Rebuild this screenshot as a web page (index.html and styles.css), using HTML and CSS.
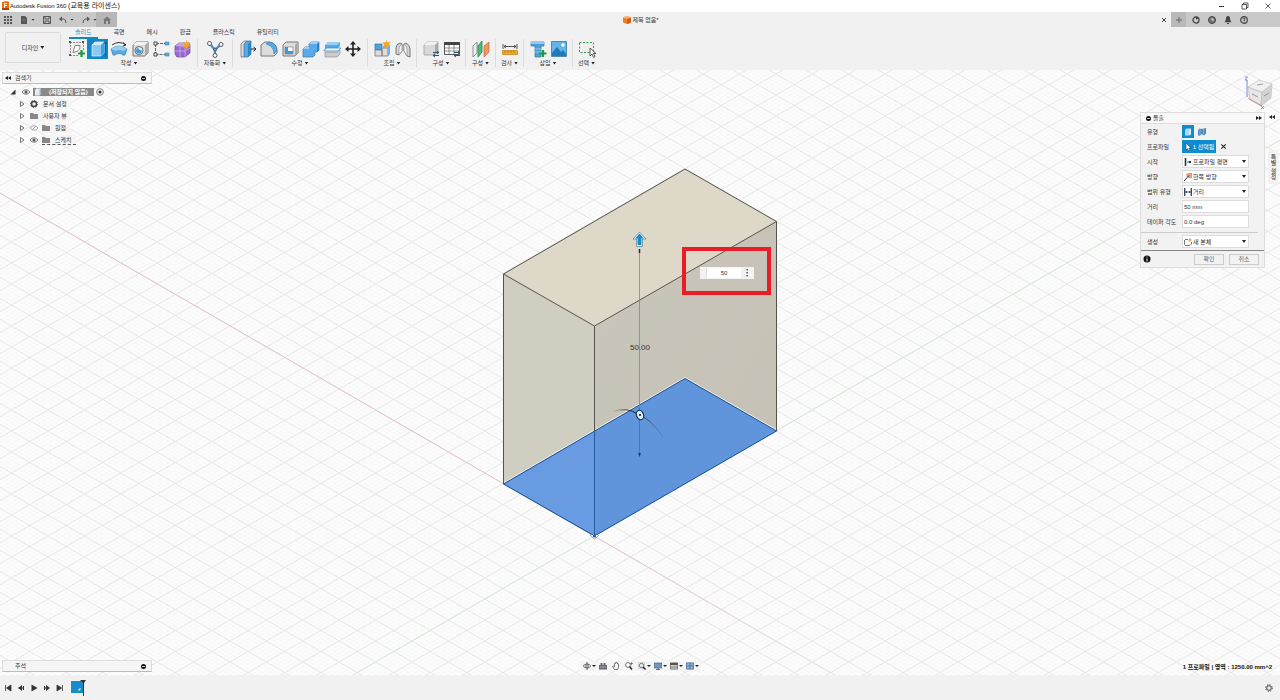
FILE: index.html
```html
<!DOCTYPE html>
<html lang="ko">
<head>
    <meta charset="UTF-8">
    <meta name="viewport" content="width=device-width, initial-scale=1.0">
    <title>Autodesk Fusion 360</title>
    <link rel="stylesheet" href="styles.css">
</head>
<body>

<!-- Title bar -->
<header class="titlebar">
    <svg class="app-logo" viewBox="0 0 8 10"><path d="M1 1l5-1 2 1v8H1z" fill="#f26a0c"/><path d="M1 7h7v2H1z" fill="#b63d00"/><path d="M3 2h3v1H4v1h2v1H4v2H3z" fill="#fff"/></svg>
    <h1>Autodesk Fusion 360 <span>(교육용 라이센스)</span></h1>
    <div class="window-buttons">
        <button aria-label="최소화"><svg viewBox="0 0 8 8"><path d="M1 4.500h5" stroke="#333" fill="none"/></svg></button>
        <button aria-label="복원"><svg viewBox="0 0 8 8"><path d="M1 2.500h4.500V7H1zM2.500 2.500V1H7v4.500H5.500" stroke="#333" stroke-width=".8" fill="none"/></svg></button>
        <button aria-label="닫기"><svg viewBox="0 0 8 8"><path d="M1.500 1.500l5 5m0-5l-5 5" stroke="#333" stroke-width=".8" fill="none"/></svg></button>
    </div>
</header>

<!-- Quick access bar and document tab -->
<div class="docbar">
    <div class="quick">
        <button aria-label="데이터 패널"><svg viewBox="0 0 8 8"><path d="M0 0h2v2H0zM3 0h2v2H3zM6 0h2v2H6zM0 3h2v2H0zM3 3h2v2H3zM6 3h2v2H6zM0 6h2v2H0zM3 6h2v2H3zM6 6h2v2H6z" fill="#555"/></svg></button>
        <button class="caret" aria-label="파일"><svg viewBox="0 0 8 8"><path d="M1 0h4l2 2v6H1z" fill="#555"/><path d="M2.500 3.500h3m-3 1.500h3" stroke="#999" stroke-width=".5"/></svg></button>
        <button aria-label="저장"><svg viewBox="0 0 8 8"><path d="M.5.500h7v7h-7zM2 .500v2.500h4V.500M2 7.500V5h4v2.500" fill="none" stroke="#555"/></svg></button>
        <button class="caret" aria-label="명령 취소"><svg viewBox="0 0 8 8"><path d="M0 3l3-2.500v5z" fill="#555"/><path d="M2 3h2.500Q7 3.500 7 7" fill="none" stroke="#555"/></svg></button>
        <button class="caret" aria-label="명령 복구"><svg viewBox="0 0 8 8"><path d="M8 3L5 .500v5z" fill="#555"/><path d="M6 3H3.500Q1 3.500 1 7" fill="none" stroke="#555"/></svg></button>
    </div>
    <button class="home" aria-label="홈"><svg viewBox="0 0 8 8"><path d="M4 .500L0 4h1v4h2V5h2v3h2V4h1z" fill="#777"/></svg></button>
    <div class="doc-tab">
        <svg viewBox="0 0 8 8"><path d="M4 0l4 1.500v5L4 8 0 6.500v-5z" fill="#ef7d24"/><path d="M0 1.500L4 3l4-1.500L4 0z" fill="#ffb36b"/><path d="M4 3v5l4-1.500v-5z" fill="#d85e0c"/></svg>
        <span>제목 없음*</span>
        <button class="close" aria-label="탭 닫기"><svg viewBox="0 0 8 8"><path d="M2 2l4 4m0-4L2 6" stroke="#444" fill="none"/></svg></button>
    </div>
    <button class="new-tab" aria-label="새 디자인"><svg viewBox="0 0 8 8"><path d="M4 1v6M1 4h6" stroke="#666" fill="none"/></svg></button>
    <div class="doc-tools">
        <button aria-label="확장"><svg viewBox="0 0 8 8"><circle cx="4" cy="4" r="3" fill="none" stroke="#444" stroke-width="1.300"/><path d="M4 3.500V1l2.500 1.500z" fill="#444"/></svg></button>
        <button aria-label="작업 상태"><svg viewBox="0 0 8 8"><circle cx="4" cy="4" r="3.500" fill="#777" stroke="#444"/><path d="M4 2v2h2" stroke="#ddd" fill="none"/></svg></button>
        <button aria-label="알림"><svg viewBox="0 0 8 8"><path d="M4 0c2 0 2 2 2.200 4L7.500 6.200h-7L1.800 4C2 2 2 0 4 0M3 7h2v1H3z" fill="#444"/></svg></button>
        <button aria-label="도움말"><svg viewBox="0 0 8 8"><circle cx="4" cy="4" r="3.300" fill="none" stroke="#444" stroke-width="1.200"/><path d="M2.800 3.200Q3 2 4 2t1.100 1Q5 4 4 4.200V5m0 .500v.800" stroke="#444" fill="none"/></svg></button>
    </div>
</div>

<!-- Ribbon -->
<div class="ribbon">
    <button class="workspace">디자인 <i class="tri"></i></button>
    <div class="ribbon-main">
        <nav class="tabs">
            <a href="#" class="active">솔리드</a>
            <a href="#">곡면</a>
            <a href="#">메시</a>
            <a href="#">판금</a>
            <a href="#">플라스틱</a>
            <a href="#">유틸리티</a>
        </nav>
        <div class="groups">
            <div class="group first">
                <div class="icons">
                    <button aria-label="스케치 작성"><svg viewBox="0 0 18 18"><path d="M2 2.500h13M2.500 2v13M2 15.500h8M15.500 2v8" fill="none" stroke="#777" stroke-width=".8" stroke-dasharray="2 1"/><path d="M5 12.500l2-7h5q1 4-3 6z" fill="#fff" stroke="#666" stroke-width=".8"/><path d="M1 1h2v2H1zM14 1h2v2h-2zM1 14h2v2H1z" fill="#555"/><path d="M13.500 10v7M10 13.500h7" stroke="#1c9b3c" stroke-width="2.200"/></svg></button>
                    <button class="selected" aria-label="돌출"><svg viewBox="0 0 18 18"><path d="M3 5l3-3h9v11l-3 3H3z" fill="#8cc9f5" stroke="#e8f5ff" stroke-width=".7"/><path d="M3 5l3-3h9l-3 3z" fill="#d3ecfd"/><path d="M12 5l3-3v11l-3 3z" fill="#459ee0"/><path d="M16.500 17V2m-1.500 2l1.500-2.500L18 4" fill="none" stroke="#114f80" stroke-width=".7"/></svg></button>
                    <button aria-label="회전"><svg viewBox="0 0 18 18"><path d="M1 9q8-6 16 0l-2 6q-2 1-3.500-1-2.500-1-5 0Q5 16 3 15z" fill="#59a9e3" stroke="#3578ab" stroke-width=".6"/><path d="M1 9q8-6 16 0l-4 2q-4-2-8 0z" fill="#96cdf3"/><path d="M2 5q7-5 14 0M13 2.500l3 2.500-3 1" fill="none" stroke="#333"/></svg></button>
                    <button aria-label="구멍"><svg viewBox="0 0 18 18"><path d="M2 5l3-3h12v11l-3 3H2z" fill="#ddd" stroke="#777"/><path d="M14 5l3-3v11l-3 3z" fill="#aaa"/><path d="M2 5l3-3h12l-3 3z" fill="#f3f3f3"/><circle cx="8" cy="10.500" r="4" fill="#e9f5fd" stroke="#666"/><path d="M5 10.500a3 3 0 006 0q-3 0-4-3-2 1-2 3" fill="#3f9bd9"/></svg></button>
                    <button aria-label="직사각형 패턴"><svg viewBox="0 0 18 18"><path d="M4 3.500h10M3.500 4v10m0 .500h10" fill="none" stroke="#666" stroke-dasharray="3 1"/><path d="M2 2h3v3H2zM2 13h3v3H2z" fill="#fff" stroke="#444"/><path d="M13 2h4v3h-4zM13 13h4v3h-4z" fill="#5daee6" stroke="#397eb0" stroke-width=".6"/></svg></button>
                    <button aria-label="양식 작성"><svg viewBox="0 0 18 18"><path d="M2 6l4-3h10l1 2v8l-5 4H4l-2-3z" fill="#9868cf" stroke="#704aa5" stroke-width=".7"/><path d="M2 6l4-3h10l-4 4z" fill="#c4a5e7"/><path d="M7 7v10M2 11h10l5-3M12 7v10" stroke="#d9c5ef" stroke-width=".6" fill="none"/><path d="M13.500 0l1 3 3-1-1.500 2.500L18 6l-3 .500-1 3L12.500 7l-3 .500L11 5 9.500 2.500l3 .500z" fill="#f7a51d"/></svg></button>
                </div>
                <button class="group-label">작성 <i class="tri"></i></button>
            </div>
            <div class="group wide">
                <div class="icons">
                    <button aria-label="자동화"><svg viewBox="0 0 18 18"><path d="M4 4l5 6 5-5M9 10v5" stroke="#3a91ce" stroke-width="2.200" fill="none"/><g fill="#fff" stroke="#555"><circle cx="3.500" cy="3.500" r="2"/><circle cx="15" cy="4.500" r="2"/><circle cx="9" cy="9.500" r="1.500" fill="#61b1e6"/><circle cx="9" cy="15.500" r="2"/></g></svg></button>
                </div>
                <button class="group-label">자동화 <i class="tri"></i></button>
            </div>
            <div class="group roomy">
                <div class="icons">
                    <button aria-label="밀고 당기기"><svg viewBox="0 0 18 18"><path d="M2 4l3-3h3v13l-3 3H2z" fill="#ddd" stroke="#777" stroke-width=".8"/><path d="M5 4l3-3h4v13l-3 3H5z" fill="#56a9e5" stroke="#3475a5" stroke-width=".7"/><path d="M9 4l3-3v13l-3 3z" fill="#2f86c4"/><path d="M12 9h4m-1.500-2L17 9l-2.500 2" stroke="#222" fill="none"/></svg></button>
                    <button aria-label="모깎기"><svg viewBox="0 0 18 18"><path d="M1 16V5l4-3h4q8 1 8 9v2l-3 3z" fill="#ddd" stroke="#777"/><path d="M6 4l3-2q8 1 8 9l-3 3q0-8-8-10" fill="#57abe6" stroke="#397bab" stroke-width=".6"/></svg></button>
                    <button aria-label="쉘"><svg viewBox="0 0 18 18"><path d="M2 5l3-3h12v11l-3 3H2z" fill="#ddd" stroke="#777"/><path d="M14 5l3-3v11l-3 3z" fill="#aaa"/><path d="M4 7h8v7H4z" fill="#fff" stroke="#777" stroke-width=".6"/><path d="M4 7h3v4h5v3H4z" fill="#3e99da"/></svg></button>
                    <button aria-label="결합"><svg viewBox="0 0 18 18"><path d="M1 9l2-2h4V4l2-2h8v8l-2 2h-2v3l-2 2H1z" fill="#58abe8" stroke="#3478ab" stroke-width=".7"/><path d="M7 4l2-2h8l-2 2zM1 9l2-2h4v2z" fill="#9bd1f5"/><path d="M15 4l2-2v8l-2 2z" fill="#2e82c1"/></svg></button>
                    <button aria-label="본체 분할"><svg viewBox="0 0 18 18"><path d="M2 5l3-3h12v4l-3 3H2z" fill="#55aae7"/><path d="M2 5l3-3h12l-3 3z" fill="#9bd1f5"/><path d="M1 10l3-2h14l-3 3H1z" fill="#eaf5fb" stroke="#3c86b8" stroke-width=".7"/><path d="M2 12h12l3-2v4l-3 3H2z" fill="#ccc" stroke="#888" stroke-width=".6"/></svg></button>
                    <button aria-label="이동"><svg viewBox="0 0 18 18"><path d="M9 3v12M3 9h12" stroke="#222" stroke-width="1.600"/><path d="M9 1l3 3.500H6zM9 17l3-3.500H6zM1 9l3.500-3v6zM17 9l-3.500-3v6z" fill="#222"/></svg></button>
                </div>
                <button class="group-label">수정 <i class="tri"></i></button>
            </div>
            <div class="group">
                <div class="icons">
                    <button aria-label="새 구성요소"><svg viewBox="0 0 18 18"><path d="M2 4h7v6H2z" fill="#4ca3e1" stroke="#3478a9" stroke-width=".7"/><path d="M2 10h7v6H2zM9 8h6v8H9z" fill="#ddd" stroke="#777" stroke-width=".8"/><path d="M9 8l2-2h6l-2 2zM15 8l2-2v8l-2 2z" fill="#69b5ea"/><path d="M13.500 0l1 2.500 3-1L16 4l2 1.500-3 .500-1 3-1.500-2.500-3 .500L11 5 9.500 2l3 .500z" fill="#f7a51d"/></svg></button>
                    <button aria-label="접합"><svg viewBox="0 0 18 18"><path d="M2 8q0-4 4-5l2 1v7l-3 4-3-1zM16 9q0-4-4-6l-2 1v7l3 5 3 1z" fill="#d5d5d5" stroke="#777"/><path d="M5 9q0-3 3-5v7l-3 4zM13 9q0-3-3-5v7l3 5z" fill="#f4f4f4" stroke="#888" stroke-width=".6"/></svg></button>
                </div>
                <button class="group-label">조립 <i class="tri"></i></button>
            </div>
            <div class="group">
                <div class="icons">
                    <button aria-label="구성"><svg viewBox="0 0 18 18"><path d="M2 5l3-3h11v9l-3 4H2z" fill="#d9d9d9" stroke="#999" stroke-width=".7"/><path d="M2 5l3-3h11l-3 3z" fill="#f1f1f1"/><path d="M13 5l3-3v9l-3 4z" fill="#aaa"/><path d="M11 12.500h6m-6 3h6M15 11l2 1.500-2 1.500m-2 0l-2 1.500 2 1.500" fill="none" stroke="#31536b"/></svg></button>
                    <button aria-label="구성 테이블"><svg viewBox="0 0 18 18"><path d="M1.500 2.500h15v12h-15z" fill="#fff" stroke="#555"/><path d="M1 2h16v3H1z" fill="#444"/><path d="M2 8h14M2 11h14M6 5v9M11 5v9" stroke="#777" stroke-width=".8"/><path d="M11 12.500h6m-6 3h6M15 11l2 1.500-2 1.500m-2 0l-2 1.500 2 1.500" fill="none" stroke="#31536b"/></svg></button>
                </div>
                <button class="group-label">구성 <i class="tri"></i></button>
            </div>
            <div class="group roomy">
                <div class="icons">
                    <button aria-label="평면"><svg viewBox="0 0 18 18"><path d="M1 6l4-4v11l-4 4z" fill="#eee" stroke="#777" stroke-width=".8"/><path d="M6 6l4-5v11l-4 5z" fill="#4dbd7c" stroke="#27834e" stroke-width=".8"/><path d="M12 6l5-4v10l-5 5z" fill="#ef9761" stroke="#c66b35" stroke-width=".7"/></svg></button>
                </div>
                <button class="group-label">구성 <i class="tri"></i></button>
            </div>
            <div class="group">
                <div class="icons">
                    <button aria-label="측정"><svg viewBox="0 0 18 18"><path d="M2 4v5M16 4v5M3 6.500h12M5 5L3 6.500 5 8m8-3l2 1.500L13 8" fill="none" stroke="#444" stroke-width=".9"/><path d="M1.500 10.500h15v4h-15z" fill="#efa928" stroke="#c37d12" stroke-width=".7"/><path d="M4 11v1.500m3-1.500v1.500m3-1.500v1.500m3-1.500v1.500" stroke="#8b570a" stroke-width=".6"/></svg></button>
                </div>
                <button class="group-label">검사 <i class="tri"></i></button>
            </div>
            <div class="group">
                <div class="icons">
                    <button aria-label="파스너 삽입"><svg viewBox="0 0 18 18"><path d="M2 2h13v4h-3v11H6V6H2z" fill="#4c9ed7" stroke="#34759f" stroke-width=".7"/><path d="M2 2h13v2H2z" fill="#91c9f1"/><path d="M6 9h6m-6 3h6" stroke="#b5dcf5" stroke-width=".7"/><path d="M14 10v7m-3.500-3.500h7" stroke="#1c9b3c" stroke-width="2.200"/></svg></button>
                    <button aria-label="캔버스"><svg viewBox="0 0 18 18"><path d="M1.500 1.500h15v15h-15z" fill="#63b4ea" stroke="#4a8bb8"/><path d="M2 13l5-6 4 5 2-2 3 4v2H2z" fill="#2379b4"/><circle cx="13" cy="5" r="1.700" fill="#fff"/></svg></button>
                </div>
                <button class="group-label">삽입 <i class="tri"></i></button>
            </div>
            <div class="group last">
                <div class="icons">
                    <button aria-label="선택"><svg viewBox="0 0 18 18"><path d="M1.500 2.500h14v10h-14z" fill="none" stroke="#2f9d51" stroke-dasharray="2 1.500"/><path d="M12 8v8l2-2 1.500 3.500 1.500-1-1.500-3H18z" fill="#fff" stroke="#333" stroke-width=".8"/></svg></button>
                </div>
                <button class="group-label">선택 <i class="tri"></i></button>
            </div>
        </div>
    </div>
</div>

<!-- Modeling viewport -->
<main class="viewport">
    <svg class="scene" viewBox="0 70 1280 605" preserveAspectRatio="xMidYMid slice">
        <defs>
            <pattern id="minor" x="594" y="536" width="7.280" height="4.200" patternUnits="userSpaceOnUse">
                <path d="M0 0l7.280 4.200M0 4.200L7.280 0" stroke="#f1f1f1" stroke-width=".5"/>
            </pattern>
            <pattern id="major" x="594" y="536" width="36.400" height="21" patternUnits="userSpaceOnUse">
                <path d="M0 0l36.400 21M0 21L36.400 0" stroke="#dedede" stroke-width=".7"/>
            </pattern>
            <linearGradient id="rightFace" x1="0" y1="0" x2="1" y2="1">
                <stop offset="0" stop-color="#c9c6bb"/>
                <stop offset="1" stop-color="#c5c0b4"/>
            </linearGradient>
            <linearGradient id="axisX" gradientUnits="userSpaceOnUse" x1="0" y1="0" x2="834" y2="0">
                <stop offset="0" stop-color="#dfb9bc"/>
                <stop offset=".75" stop-color="#dfb9bc"/>
                <stop offset="1" stop-color="#dfb9bc" stop-opacity=".2"/>
            </linearGradient>
            <linearGradient id="arc" x1="0" x2="1">
                <stop offset="0" stop-color="#222" stop-opacity="0"/>
                <stop offset=".4" stop-color="#222"/>
                <stop offset="1" stop-color="#222" stop-opacity=".1"/>
            </linearGradient>
        </defs>
        <rect y="70" width="1280" height="605" fill="#fdfdfd"/>
        <rect y="70" width="1280" height="605" fill="url(#minor)"/>
        <rect y="70" width="1280" height="605" fill="url(#major)"/>
        <path d="M0 193l594 343 240 139" stroke="url(#axisX)" stroke-width=".8" fill="none"/>
        <path d="M353 675l241-139L1280 140" stroke="#cfe9cf" stroke-width=".8" fill="none"/>

        <!-- box -->
        <path d="M503.500 274L594.500 326v210L503.500 484z" fill="#d0cdc1"/>
        <path d="M594.500 326L776.500 221.500V431L594.500 536z" fill="url(#rightFace)"/>
        <path d="M685 169l91.500 52.500L594.500 326l-91-52z" fill="#ddd8c8"/>
        <path d="M503.500 484L685 378.500 776.500 431 594.500 536z" fill="#6195db"/>
        <path d="M503.500 484l91-52.500V536z" fill="#699be2"/>
        <path d="M503.500 483L685 377.500 776.500 430" fill="none" stroke="#f5f4ee"/>
        <path d="M503.500 484L685 378.500 776.500 431 594.500 536z" fill="none" stroke="#16509b"/>
        <path d="M503.500 484V274L685 169l91.500 52.500V431M503.500 274l91 52 182-104.500M594.500 326v105" fill="none" stroke="#54534c"/>
        <path d="M594.500 431v105" stroke="#275a9f"/>

        <!-- distance manipulator -->
        <path d="M639.500 250v157" stroke="#8a877e" stroke-width=".8"/>
        <path d="M639.500 407v48" stroke="#3c6fb4" stroke-width=".8"/>
        <path d="M639.500 249v4" stroke="#222" stroke-width="1.500"/>
        <path d="M638 453h3l-1.500 4z" fill="#173f75"/>
        <path d="M639.500 232l6.500 7h-3.500v7.500h-6V239H633z" fill="#fff" stroke="#3d647f" stroke-width=".6"/>
        <path d="M639.500 233.500l4.500 5h-2.500v6.500h-4v-6.500H635z" fill="#158bd0"/>
        <path d="M612 412q15-6 27 3 12 4 24 22" fill="none" stroke="url(#arc)"/>
        <ellipse cx="640" cy="415" rx="3.500" ry="4.800" transform="rotate(-20 640 415)" fill="#e4eefb" stroke="#12345e" stroke-width="1.200"/>
        <circle cx="640" cy="415" r="1" fill="#111"/>
        <text class="dim" x="640" y="350" text-anchor="middle">50.00</text>
        <path d="M590 535l4.500 4 4.500-4" fill="#fff" stroke="#7d6c94" stroke-width=".7"/>
        <circle cx="594.500" cy="536" r="1.500" fill="#294b93"/>
        <rect x="684" y="249" width="85" height="44" fill="none" stroke="#ea1c27" stroke-width="4"/>
    </svg>

    <div class="value-box">
        <span class="grip"></span>
        <input type="text" value="50" aria-label="거리 값">
        <button aria-label="더 보기"><svg viewBox="0 0 8 8"><path d="M3.500 0h1.200v1.500H3.500zM3.500 3h1.200v1.500H3.500zM3.500 6h1.200v1.500H3.500z" fill="#333"/></svg></button>
    </div>

    <!-- Browser tree -->
    <section class="browser">
        <div class="bar">
            <button aria-label="접기"><svg viewBox="0 0 8 8"><path d="M4 2v4L1 4zM7 2v4L4 4z" fill="#222"/></svg></button>
            <span>검색기</span>
            <button class="dot" aria-label="패널 옵션"></button>
        </div>
        <ul class="tree">
            <li>
                <svg class="open" viewBox="0 0 8 8"><path d="M6.500 1.500v5h-5z" fill="#333"/></svg>
                <svg class="eye" viewBox="0 0 8 8"><path d="M0 4q4-4.500 8 0-4 4.500-8 0z" fill="#fff" stroke="#555" stroke-width=".8"/><circle cx="4" cy="4" r="1.500" fill="#555"/></svg>
                <span class="root"><svg viewBox="0 0 8 8"><path d="M1 2l1.500-1.500H7V6L5.500 7.500H1z" fill="#e8edf5"/><path d="M5.500 2L7 .500V6L5.500 7.500z" fill="#9fb2ca"/></svg>(저장되지 않음)</span>
                <svg class="radio" viewBox="0 0 8 8"><circle cx="4" cy="4" r="3.300" fill="#fff" stroke="#555" stroke-width=".8"/><circle cx="4" cy="4" r="1.600" fill="#234"/></svg>
            </li>
            <li class="child">
                <svg viewBox="0 0 8 8"><path d="M2.500 1.500L6 4 2.500 6.500z" fill="#fff" stroke="#555" stroke-width=".8"/></svg>
                <span class="node"><svg viewBox="0 0 8 8"><circle cx="4" cy="4" r="2.500" fill="none" stroke="#444" stroke-width="1.500"/><circle cx="4" cy="4" r="3.500" fill="none" stroke="#444" stroke-dasharray="1.300 1.400"/></svg>문서 설정</span>
            </li>
            <li class="child">
                <svg viewBox="0 0 8 8"><path d="M2.500 1.500L6 4 2.500 6.500z" fill="#fff" stroke="#555" stroke-width=".8"/></svg>
                <span class="node"><svg viewBox="0 0 8 8"><path d="M0 1h3l1 1h4v5H0z" fill="#888"/></svg>사용자 뷰</span>
            </li>
            <li class="child">
                <svg viewBox="0 0 8 8"><path d="M2.500 1.500L6 4 2.500 6.500z" fill="#fff" stroke="#555" stroke-width=".8"/></svg>
                <svg class="eye off" viewBox="0 0 8 8"><path d="M0 4q4-4.500 8 0-4 4.500-8 0z" fill="#fff" stroke="#555" stroke-width=".8"/><path d="M2 6l4-4" stroke="#555" stroke-width=".8"/></svg>
                <span class="node"><svg viewBox="0 0 8 8"><path d="M0 1h3l1 1h4v5H0z" fill="#888"/></svg>원점</span>
            </li>
            <li class="child">
                <svg viewBox="0 0 8 8"><path d="M2.500 1.500L6 4 2.500 6.500z" fill="#fff" stroke="#555" stroke-width=".8"/></svg>
                <svg class="eye" viewBox="0 0 8 8"><path d="M0 4q4-4.500 8 0-4 4.500-8 0z" fill="#fff" stroke="#555" stroke-width=".8"/><circle cx="4" cy="4" r="1.500" fill="#555"/></svg>
                <span class="node sketches"><svg viewBox="0 0 8 8"><path d="M0 1h3l1 1h4v5H0z" fill="#888"/></svg>스케치</span>
            </li>
        </ul>
    </section>

    <!-- View cube -->
    <svg class="viewcube" viewBox="0 0 32 36">
        <path d="M4 11l14 5-1 14L6 24z" fill="#e6e6e6" stroke="#bbb" stroke-width=".6"/>
        <path d="M18 16l10-8-1 14-10 8z" fill="#d3d3d3" stroke="#bbb" stroke-width=".6"/>
        <path d="M4 11l11-7 13 4-10 8z" fill="#f0f0f0" stroke="#bbb" stroke-width=".6"/>
        <path d="M8 18l6 3M20 20l5-3M13 9l6-1" stroke="#888" stroke-width=".8"/>
        <path d="M3 4v17" stroke="#7079dc" stroke-width=".9"/>
        <path d="M4 22l14 8" stroke="#d67d7d" stroke-width=".9"/>
        <path d="M1 1h2.500L1 4h2.500" stroke="#626bd5" stroke-width=".7" fill="none"/>
        <path d="M17 30l3 3m0-3l-3 3" stroke="#d55" stroke-width=".7"/>
    </svg>

    <!-- Extrude dialog -->
    <form class="dialog">
        <div class="dialog-head">
            <span class="dot"></span>
            <span>돌출</span>
            <button type="button" aria-label="펼치기"><svg viewBox="0 0 8 8"><path d="M1 2v4l3-2zM4 2v4l3-2z" fill="#222"/></svg></button>
        </div>
        <div class="fields">
            <div class="row">
                <span class="name">유형</span>
                <button type="button" class="type on" aria-label="돌출"><svg viewBox="0 0 8 8"><path d="M1 2l1.500-1.500H7V6L5.500 7.500H1z" fill="#a9daf8"/><path d="M5.500 2L7 .500V6L5.500 7.500z" fill="#e2f3fd"/></svg></button>
                <button type="button" class="type" aria-label="얇은 돌출"><svg viewBox="0 0 8 8"><path d="M0 2l1.500-1.500L4 1l4-1v5.500L6 7.500 4 6 1.500 8 0 7z" fill="#4b89bd"/><path d="M2 1v6M5.500 1v5" stroke="#a4cae8" stroke-width=".7"/></svg></button>
            </div>
            <div class="row">
                <span class="name">프로파일</span>
                <button type="button" class="pick"><svg viewBox="0 0 8 8"><path d="M2 0v7l1.500-1.500L5 8l1-.500L5 5h2z" fill="#fff" stroke="#234" stroke-width=".5"/></svg>1 선택됨</button>
                <button type="button" class="clear" aria-label="선택 해제"><svg viewBox="0 0 8 8"><path d="M1.500 1.500l5 5m0-5l-5 5" stroke="#222" stroke-width="1.200"/></svg></button>
            </div>
            <div class="row">
                <label for="start">시작</label>
                <div class="select">
                    <svg viewBox="0 0 8 8"><path d="M1.500 0v8" stroke="#223548" stroke-width="1.600"/><path d="M3 4h3" stroke="#223548" stroke-width=".8"/><path d="M5 3h2v2H5z" fill="#223548"/></svg>
                    <select id="start"><option>프로파일 평면</option></select><i class="tri"></i>
                </div>
            </div>
            <div class="row">
                <label for="direction">방향</label>
                <div class="select">
                    <svg viewBox="0 0 8 8"><path d="M2.500 1l5-1v5l-4-1z" fill="#f2a36b" stroke="#b96d36" stroke-width=".5"/><path d="M0 8l5-5.500" stroke="#333"/></svg>
                    <select id="direction"><option>한쪽 방향</option></select><i class="tri"></i>
                </div>
            </div>
            <div class="row">
                <label for="extent">범위 유형</label>
                <div class="select">
                    <svg viewBox="0 0 8 8"><path d="M.700 0v8M7.300 0v8" stroke="#223548" stroke-width="1.200"/><path d="M1 4h6" stroke="#223548" stroke-width=".7"/><path d="M1 4l2-1v2zM7 4L5 3v2z" fill="#223548"/></svg>
                    <select id="extent"><option>거리</option></select><i class="tri"></i>
                </div>
            </div>
            <div class="row">
                <label for="distance">거리</label>
                <input type="text" id="distance" value="50 mm">
            </div>
            <div class="row">
                <label for="taper">테이퍼 각도</label>
                <input type="text" id="taper" value="0.0 deg">
            </div>
            <div class="row operation">
                <label for="operation">생성</label>
                <div class="select">
                    <svg viewBox="0 0 8 8"><path d="M1 1.500h3M.500 2v4.500l1 1H6L7.500 6V4" fill="none" stroke="#555" stroke-width=".8"/><path d="M6 0l.700 1.300L8 2l-1.300.700L6 4l-.700-1.300L4 2l1.300-.700z" fill="#f29a1f"/></svg>
                    <select id="operation"><option>새 본체</option></select><i class="tri"></i>
                </div>
            </div>
        </div>
        <div class="dialog-foot">
            <svg viewBox="0 0 8 8"><circle cx="4" cy="4" r="3.500" fill="#111"/><path d="M4 1.500v1M4 3.500v3" stroke="#fff"/></svg>
            <button type="button">확인</button>
            <button type="button">취소</button>
        </div>
    </form>
    <button class="side-toggle" aria-label="패널 펼치기"><svg viewBox="0 0 8 8"><path d="M4 2v4L1 4zM7 2v4L4 4z" fill="#222"/></svg></button>
    <button class="side-tab">특별 설정</button>

    <!-- Comments and navigation -->
    <div class="bar comments">
        <span>주석</span>
        <button class="dot" aria-label="주석 추가"></button>
    </div>
    <div class="navbar">
        <button class="caret" aria-label="궤도"><svg viewBox="0 0 8 8"><path d="M4 0v8" stroke="#444" stroke-width=".8"/><ellipse cx="4" cy="4" rx="3.600" ry="1.800" fill="none" stroke="#555" stroke-width=".8"/><ellipse cx="4" cy="4" rx="1.500" ry="3" fill="none" stroke="#777" stroke-width=".7"/></svg></button>
        <button aria-label="보기"><svg viewBox="0 0 8 8"><path d="M0 3h8v4.500H0zM1.500 1h2v2h-2zM4.500 1h2v2h-2z" fill="#667"/><path d="M1 5h6" stroke="#ccd" stroke-width=".7"/></svg></button>
        <button aria-label="초점이동"><svg viewBox="0 0 8 8"><path d="M2.500 7.500L.500 4.500l.700-.500L2.500 5V1.500h1v-1h1v.600h1V2h1v3.500l-1 2z" fill="#fff" stroke="#444" stroke-width=".7"/></svg></button>
        <button aria-label="줌"><svg viewBox="0 0 8 8"><circle cx="3" cy="3" r="2.400" fill="#fff" stroke="#555" stroke-width=".8"/><path d="M4.500 4.500L7 7.500" stroke="#222" stroke-width="1.400"/><path d="M6.500 0v3M5 1.500h3" stroke="#555" stroke-width=".6"/></svg></button>
        <button class="caret" aria-label="맞춤"><svg viewBox="0 0 8 8"><path d="M.500.500h6v6h-6z" fill="none" stroke="#999" stroke-width=".6" stroke-dasharray="1 1"/><circle cx="3.500" cy="3.500" r="2.200" fill="#e5edf5" stroke="#555" stroke-width=".8"/><path d="M5 5l2.500 2.500" stroke="#222" stroke-width="1.400"/></svg></button>
        <button class="caret" aria-label="화면표시 설정"><svg viewBox="0 0 8 8"><path d="M0 1h8v5H0z" fill="#6d98ce" stroke="#456" stroke-width=".6"/><path d="M2 7.500h4M4 6v1.500" stroke="#555" stroke-width=".8"/></svg></button>
        <button class="caret" aria-label="그리드 및 스냅"><svg viewBox="0 0 8 8"><path d="M.400.900h7.200v6.200H.400z" fill="#ccc" stroke="#555" stroke-width=".7"/><path d="M0 1h8v2H0z" fill="#555"/><path d="M0 5h8" stroke="#777" stroke-width=".8"/></svg></button>
        <button class="caret" aria-label="뷰포트"><svg viewBox="0 0 8 8"><path d="M.400.900h7.200v6.200H.400z" fill="#90b4df" stroke="#48678c" stroke-width=".8"/><path d="M0 4h8M4 1v6" stroke="#48678c" stroke-width=".8"/></svg></button>
    </div>
    <p class="status">1 프로파일 | 영역 : 1250.00 mm^2</p>
</main>

<!-- Timeline -->
<footer class="timeline">
    <button aria-label="처음으로"><svg viewBox="0 0 8 8"><path d="M1.500 1v6M7 1v6L2.500 4z" fill="#333" stroke="#333" stroke-width=".8"/></svg></button>
    <button aria-label="이전"><svg viewBox="0 0 8 8"><path d="M5 1v6L1 4z" fill="#333"/><path d="M6.500 2v4M5 4h2" stroke="#333"/></svg></button>
    <button aria-label="재생"><svg viewBox="0 0 8 8"><path d="M1.500.500v7l6-3.500z" fill="#333"/></svg></button>
    <button aria-label="다음"><svg viewBox="0 0 8 8"><path d="M3 1v6l4-3z" fill="#333"/><path d="M1.500 2v4M1 4h2" stroke="#333"/></svg></button>
    <button aria-label="끝으로"><svg viewBox="0 0 8 8"><path d="M6.500 1v6M1 1v6l4.500-3z" fill="#333" stroke="#333" stroke-width=".8"/></svg></button>
    <svg class="feature" viewBox="0 0 16 16"><path d="M0 1h13v12H0z" fill="#168ccc"/><path d="M7 10l2-2 1 1-2 2z" fill="#f5e7a5"/><path d="M9 0h6l-2 3v13h-1V3z" fill="#333"/></svg>
    <button class="settings" aria-label="설정"><svg viewBox="0 0 8 8"><circle cx="4" cy="4" r="2.300" fill="none" stroke="#444"/><circle cx="4" cy="4" r="3.300" fill="none" stroke="#444" stroke-dasharray="1.300 1.300"/></svg></button>
</footer>

</body>
</html>
```
FILE: styles.css
```css
* {
    box-sizing: border-box;
}
body {
    margin: 0;
    height: 100vh;
    display: flex;
    flex-direction: column;
    overflow: hidden;
    font-family: "Liberation Sans", "Noto Sans CJK KR", sans-serif;
    font-size: 6px;
    line-height: 8px;
    color: #333;
    background: #f1f1f1;
}
button, input, select {
    font: inherit;
    color: inherit;
    margin: 0;
    padding: 0;
    border: none;
    background: none;
}
button {
    display: flex;
    align-items: center;
    justify-content: center;
    cursor: pointer;
    white-space: nowrap;
}
svg {
    display: block;
    flex: none;
    width: 8px;
    height: 8px;
}
.tri {
    width: 4px;
    height: 3px;
    margin-left: 2px;
    background: #222;
    clip-path: polygon(0 0, 100% 0, 50% 100%);
}
.caret::after {
    content: "";
    width: 4px;
    height: 2px;
    margin-left: 3px;
    background: #222;
    clip-path: polygon(0 0, 100% 0, 50% 100%);
}

/* title bar */
.titlebar {
    display: flex;
    align-items: center;
    height: 12px;
    flex: none;
    background: #fff;
    color: #111;
}
.app-logo {
    height: 10px;
    margin: 0 1px;
}
h1 {
    margin: 0;
    font-size: 6px;
    font-weight: normal;
}
h1 span {
    font-size: 7px;
}
.window-buttons {
    display: flex;
    gap: 15px;
    margin-left: auto;
    margin-right: 8px;
}

/* document bar */
.docbar {
    display: flex;
    height: 15px;
    flex: none;
    background: #c9c9c9;
}
.quick {
    display: flex;
    align-items: center;
    gap: 8px;
    width: 96px;
    padding-left: 4px;
}
.quick svg {
    width: 8px;
    height: 8px;
}
.home {
    width: 21px;
    background: #b7b7b7;
}
.doc-tab {
    flex: 1;
    display: flex;
    align-items: center;
    justify-content: center;
    gap: 1px;
    position: relative;
    padding-right: 6px;
    background: #f1f1f1;
}
.doc-tab .close {
    position: absolute;
    right: 3px;
}
.new-tab {
    width: 15px;
    background: #b9b9b9;
}
.doc-tools {
    display: flex;
    gap: 8px;
    padding: 0 32px 0 6px;
}

/* ribbon */
.ribbon {
    display: flex;
    height: 43px;
    flex: none;
    background: #f1f1f1;
}
.workspace {
    width: 56px;
    height: 31px;
    margin: 5px 3px 0 5px;
    border: 1px solid #ddd;
    border-radius: 2px;
}
.tabs {
    display: flex;
    gap: 22px;
    height: 12px;
    padding-left: 5px;
}
.tabs a {
    height: 12px;
    padding-top: 1px;
    color: #333;
    text-decoration: none;
}
.tabs .active {
    margin-right: -6px;
    padding: 1px 6px 0;
    color: #2a8fbd;
    border-bottom: 2px solid #1788bd;
}
.groups {
    display: flex;
}
.group {
    display: flex;
    flex-direction: column;
    align-items: center;
    height: 28px;
    padding: 0 3px;
    border-right: 1px solid #ddd;
}
.group.first {
    padding: 0 5px 0 2px;
}
.group.wide {
    width: 35px;
}
.group.roomy {
    padding: 0 4px;
}
.group.last {
    border-right: none;
}
.icons {
    display: flex;
}
.icons button {
    width: 21px;
    height: 20px;
}
.icons svg {
    width: 18px;
    height: 18px;
}
.icons .selected {
    background: #0d87cd;
}

/* viewport */
.viewport {
    flex: 1;
    position: relative;
    overflow: hidden;
}
.scene {
    width: 100%;
    height: 100%;
}
.dim {
    font-size: 8px;
    fill: #333;
}
.value-box {
    position: absolute;
    top: 197px;
    left: calc(50% + 60px);
    display: flex;
    width: 54px;
    height: 12px;
    padding: 1px;
    background: #f3f3f3;
}
.value-box .grip {
    width: 6px;
    border-right: 1px solid #ddd;
}
.value-box input {
    width: 34px;
    background: #fff;
    text-align: center;
}
.value-box button {
    flex: 1;
}
.bar {
    display: flex;
    align-items: center;
    width: 150px;
    height: 12px;
    padding: 0 5px 0 1px;
    background: #f5f5f5;
    border: 1px solid #ddd;
    border-bottom-color: #bbb;
}
.bar span {
    flex: 1;
    padding-left: 3px;
}
.dot {
    width: 5px;
    height: 5px;
    border-radius: 50%;
    background: #111;
}
.dot::after {
    content: "";
    display: block;
    width: 3px;
    height: 1px;
    margin: 2px auto;
    background: #ccc;
}
.browser {
    position: absolute;
    top: 2px;
    left: 2px;
}
.tree {
    list-style: none;
    margin: 2px 0 0;
    padding: 0 0 0 7px;
}
.tree li {
    display: flex;
    align-items: center;
    gap: 5px;
    height: 12px;
}
.tree .child {
    padding-left: 9px;
    gap: 4px;
}
.root {
    display: flex;
    align-items: center;
    gap: 7px;
    width: 61px;
    padding-left: 1px;
    color: #fff;
    background: #898989;
    font-weight: bold;
    white-space: nowrap;
}
.tree .root {
    margin-left: -2px;
}
.tree .radio {
    margin-left: -3px;
}
.node {
    display: flex;
    align-items: center;
    gap: 5px;
    height: 10px;
    padding-right: 4px;
    background: #f5f5f5;
}
.sketches {
    border-bottom: 1px dashed #555;
}
.off {
    opacity: .6;
}
.viewcube {
    position: absolute;
    top: 6px;
    right: 4px;
    width: 32px;
    height: 36px;
}

/* extrude dialog */
.dialog {
    position: absolute;
    top: 42px;
    right: 15px;
    width: 125px;
    background: #f2f2f2;
    border: 1px solid #ddd;
}
.dialog-head {
    display: flex;
    align-items: center;
    gap: 2px;
    height: 11px;
    padding: 0 1px 0 5px;
    border-bottom: 1px solid #ddd;
    background: #f8f8f8;
}
.dialog-head button {
    margin-left: auto;
}
.row {
    display: flex;
    align-items: center;
    height: 15px;
    padding-left: 6px;
}
.row label, .name {
    width: 35px;
    white-space: nowrap;
}
.row input, .select {
    width: 67px;
    height: 13px;
    background: #fff;
    border: 1px solid #ddd;
}
.row input {
    padding-left: 1px;
}
.select {
    display: flex;
    align-items: center;
    padding: 0 2px 0 1px;
}
.select select {
    flex: 1;
    min-width: 0;
    height: 11px;
    padding-left: 1px;
    appearance: none;
}
.type {
    width: 12px;
    height: 13px;
    margin-right: 2px;
}
.type.on, .pick {
    background: #0e8ccf;
}
.pick {
    width: 34px;
    height: 13px;
    gap: 1px;
    color: #fff;
}
.clear {
    margin-left: 4px;
}
.clear svg {
    width: 7px;
    height: 7px;
}
.operation {
    height: 18px;
    margin: 3px 6px 0 0;
    border-top: 1px solid #ccc;
}
.dialog-foot {
    display: flex;
    align-items: center;
    gap: 5px;
    height: 17px;
    padding: 0 5px 0 2px;
    border-top: 1px solid #888;
}
.dialog-foot svg {
    margin-right: auto;
}
.dialog-foot button {
    width: 30px;
    height: 11px;
    border: 1px solid #ccc;
    color: #666;
}
.side-toggle {
    position: absolute;
    top: 43px;
    right: 4px;
}
.side-tab {
    position: absolute;
    top: 80px;
    right: 2px;
    width: 10px;
    height: 34px;
    background: #f2f2f2;
    writing-mode: vertical-rl;
}

/* bottom of the viewport */
.comments {
    position: absolute;
    bottom: 3px;
    left: 2px;
}
.bar.comments span {
    padding-left: 11px;
}
.navbar {
    position: absolute;
    bottom: 4px;
    left: 50%;
    transform: translateX(-50%);
    display: flex;
    gap: 5px;
    padding: 1px 3px;
    background: #f5f5f5;
}
.navbar .caret::after {
    margin-left: 1px;
}
.navbar .caret {
    margin-right: -2px;
}
.status {
    position: absolute;
    right: 8px;
    bottom: 4px;
    margin: 0;
    color: #111;
    font-weight: bold;
}

/* timeline */
.timeline {
    display: flex;
    align-items: center;
    gap: 5px;
    height: 25px;
    flex: none;
    padding: 0 7px 0 4px;
    background: #f1f1f1;
}
.feature {
    width: 16px;
    height: 16px;
    margin-left: 2px;
}
.settings {
    margin-left: auto;
}
```
